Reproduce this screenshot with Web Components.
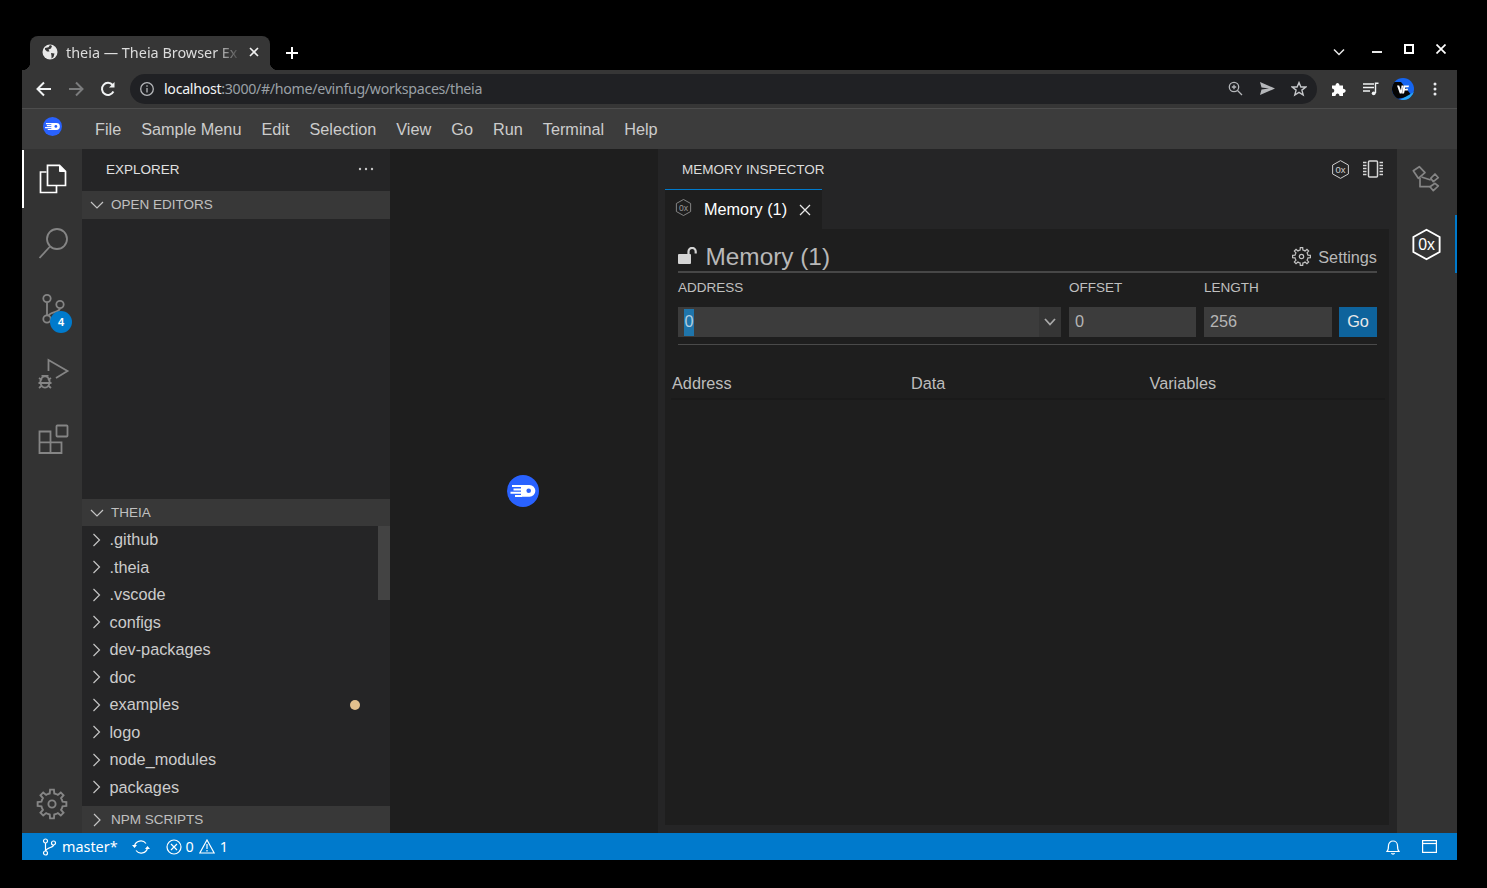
<!DOCTYPE html>
<html>
<head>
<meta charset="utf-8">
<title>theia</title>
<style>
  html, body { margin: 0; height: 100%; background: #000; overflow: hidden; }
</style>
</head>
<body>
<browser-window>
  <menu-bar></menu-bar>
  <ide-main></ide-main>
  <status-bar></status-bar>
</browser-window>

<script>
// builds a gear outline, used by both settings icons
function gearPath(cx, cy, outer, inner, teeth){
    let d = '';
    const step = Math.PI * 2 / teeth;
    for(let i = 0; i < teeth; i++){
        const a = i * step - Math.PI / 2;
        const pts = [
            [inner, a - step * .5], [inner, a - step * .27],
            [outer, a - step * .17], [outer, a + step * .17],
            [inner, a + step * .27]
        ];
        pts.forEach(([r, t], n) => {
            const cmd = (i === 0 && n === 0) ? 'M' : 'L';
            d += `${cmd}${(cx + r * Math.cos(t)).toFixed(2)} ${(cy + r * Math.sin(t)).toFixed(2)}`;
        });
    }
    return d + 'Z';
}

function hexIcon(size, stroke, color){
    return `<svg width="${size}" height="${size}" viewBox="0 0 32 32" fill="none">
      <path d="M16 2.5 28 9.2V22.8L16 29.5 4 22.8V9.2Z" stroke="${color}" stroke-width="${stroke}"/>
      <text x="16" y="21.2" text-anchor="middle" font-family="Liberation Sans, sans-serif" font-size="14.5" fill="${color}">0x</text>
    </svg>`;
}

function logo(size){
    return `<svg width="${size}" height="${size}" viewBox="0 0 32 32">
      <circle cx="16" cy="16" r="16" fill="#2962ff"/>
      <path d="M14 10H22.5A5.85 5.85 0 0 1 22.5 21.7H14Z" fill="#fff"/>
      <path d="M5 10H15V12H5ZM6.5 13.4H15V15.4H6.5ZM3.5 16.8H15V18.8H3.5ZM8 20H15V22H8Z" fill="#fff"/>
      <circle cx="21.7" cy="15.8" r="2.3" fill="#2962ff"/>
    </svg>`;
}

class BrowserWindow extends HTMLElement{
    constructor(){
        super();
        this.attachShadow({mode: 'open'});
    }

    connectedCallback(){
        this.shadowRoot.innerHTML = `
        <style>
            :host{
                display: flex;
                flex-direction: column;
                box-sizing: border-box;
                height: 888px;
                padding: 36px 30px 28px 22px;
                background: #000;
            }
            .strip{
                display: flex;
                height: 34px;
                flex: none;
                color: #fff;
            }
            .tab{
                position: relative;
                box-sizing: border-box;
                width: 240px;
                margin-left: 8px;
                display: flex;
                align-items: center;
                padding: 0 11px 2px 12px;
                background: #363636;
                border-radius: 8px 8px 0 0;
                font: 14.4px "Noto Sans", sans-serif;
                color: #dcdcdc;
            }
            .tab::before, .tab::after{
                content: '';
                position: absolute;
                bottom: 0;
                width: 8px;
                height: 8px;
            }
            .tab::before{ left: -8px; background: radial-gradient(circle at 0 0, #000 8px, #363636 8.5px); }
            .tab::after{ right: -8px; background: radial-gradient(circle at 100% 0, #000 8px, #363636 8.5px); }
            .title{
                flex: 1;
                margin-left: 8px;
                white-space: nowrap;
                -webkit-mask-image: linear-gradient(90deg, #000 82%, transparent 96%);
                mask-image: linear-gradient(90deg, #000 82%, transparent 96%);
            }
            .new{ margin-left: 6px; width: 32px; display: flex; align-items: center; justify-content: center; }
            .ctl{ width: 32px; height: 26px; display: flex; align-items: center; justify-content: center; }
            .first{ margin-left: auto; margin-right: 6px; margin-top: 3px; }
            .toolbar{
                flex: none;
                box-sizing: border-box;
                height: 39px;
                display: flex;
                align-items: center;
                padding: 0 6px 1px;
                background: #363636;
                border-bottom: 1px solid #4d4d4d;
            }
            .btn{
                flex: none;
                width: 32px;
                height: 30px;
                display: flex;
                align-items: center;
                justify-content: center;
            }
            .omni{
                flex: 1;
                margin: 0 6px;
                height: 30px;
                display: flex;
                align-items: center;
                padding: 0 2px 0 9px;
                border-radius: 15px;
                background: #202124;
                font: 14.2px "Noto Sans", sans-serif;
                color: #9aa0a6;
            }
            .url{ flex: 1; margin-left: 9px; letter-spacing: -.3px; white-space: nowrap; }
            .url b{ font-weight: 400; color: #f1f3f4; }
            .avatar{ width: 22px; height: 22px; }
        </style>
        <div class="strip">
          <div class="tab">
            <svg width="16" height="16" viewBox="0 0 16 16"><circle cx="8" cy="8" r="7.5" fill="#e8e8e8"/><path d="M3 4 6.5 3.2 8 1 10 2 9 4.5 6.5 5.5 7.5 7.5 5 7.5 3 5.5ZM9 9 12.5 9.5 11.5 13 9.5 14.5 9.5 12Z" fill="#363636"/></svg>
            <span class="title">theia — Theia Browser Ex</span>
            <svg width="10" height="10" viewBox="0 0 10 10" stroke="#f0f0f0" stroke-width="1.6"><path d="M1 1 9 9M9 1 1 9"/></svg>
          </div>
          <div class="new"><svg width="14" height="14" viewBox="0 0 14 14" stroke="#fff" stroke-width="2"><path d="M7 1V13M1 7H13"/></svg></div>
          <div class="ctl first"><svg width="12" height="8" viewBox="0 0 12 8" fill="none" stroke="#e8e8e8" stroke-width="1.5"><path d="M1 1.5 6 6.5 11 1.5"/></svg></div>
          <div class="ctl" style="align-items:flex-start;padding-top:15px;height:11px"><svg width="10" height="2"><rect width="10" height="2" fill="#e8e8e8"/></svg></div>
          <div class="ctl"><svg width="10" height="10" viewBox="0 0 10 10" fill="none" stroke="#fff" stroke-width="2"><rect x="1" y="1" width="8" height="8"/></svg></div>
          <div class="ctl"><svg width="10" height="10" viewBox="0 0 10 10" stroke="#fff" stroke-width="1.7"><path d="M.5.5 9.5 9.5M9.5.5.5 9.5"/></svg></div>
        </div>
        <div class="toolbar">
          <div class="btn"><svg width="16" height="16" viewBox="0 0 16 16" fill="none" stroke="#f1f3f4" stroke-width="2"><path d="M15 8H2M8 1.5 1.5 8 8 14.5"/></svg></div>
          <div class="btn"><svg width="16" height="16" viewBox="0 0 16 16" fill="none" stroke="#7b7c7d" stroke-width="2"><path d="M1 8H14M8 1.5 14.5 8 8 14.5"/></svg></div>
          <div class="btn"><svg width="16" height="16" viewBox="0 0 16 16" fill="none" stroke="#f1f3f4" stroke-width="2"><path d="M13.4 10.5A6 6 0 1 1 12.6 4"/><path d="M14.5 1V6.5H9Z" fill="#f1f3f4" stroke="none"/></svg></div>
          <div class="omni">
            <svg width="16" height="16" viewBox="0 0 16 16" fill="none" stroke="#b5b7ba" stroke-width="1.3"><circle cx="8" cy="8" r="6.3"/><path d="M8 7V11.5M8 4.3V5.8"/></svg>
            <span class="url"><b>localhost</b>:3000/#/home/evinfug/workspaces/theia</span>
            <div class="btn"><svg width="15" height="15" viewBox="0 0 15 15" fill="none" stroke="#b5b7ba" stroke-width="1.3"><circle cx="6" cy="6" r="4.7"/><path d="M9.5 9.5 14 14M3.8 6H8.2M6 3.8V8.2"/></svg></div>
            <div class="btn"><svg width="15" height="13" viewBox="0 0 15 13"><path d="M0 0 15 6.5 0 13 1.5 7.5 9 6.5 1.5 5.5Z" fill="#b5b7ba"/></svg></div>
            <div class="btn"><svg width="16" height="16" viewBox="0 0 16 16" fill="none" stroke="#c4c6c9" stroke-width="1.4"><path d="M8 1.6 9.9 6H14.8L10.9 9.1 12.2 14 8 11.3 3.8 14 5.1 9.1 1.2 6H6.1Z"/></svg></div>
          </div>
          <div class="btn"><svg width="16" height="16" viewBox="0 0 16 16"><path d="M1 4.5H4.5C4.5 1 8.5 1 8.5 4.5H12V7.8C15.6 7.8 15.6 12 12 12V15H8.5C8.5 11.5 4.5 11.5 4.5 15H1V11.8C4 11.8 4 7.5 1 7.5Z" fill="#fff"/></svg></div>
          <div class="btn"><svg width="16" height="14" viewBox="0 0 16 14" fill="none" stroke="#f1f3f4" stroke-width="1.4"><path d="M0 2H11M0 5.5H11M0 9H7"/><path d="M12.5 11V1.2H15.5"/><circle cx="10.7" cy="11.3" r="1.9" fill="#f1f3f4" stroke="none"/></svg></div>
          <div class="btn"><svg class="avatar" viewBox="0 0 22 22"><defs><clipPath id="av"><circle cx="11" cy="11" r="11"/></clipPath></defs><g clip-path="url(#av)"><rect width="22" height="22" fill="#1565f0"/><path d="M0 4 9 4 20 18 0 22Z" fill="#050505"/><path d="M8 22 22 14 22 22Z" fill="#29a9f5"/><path d="M5 7.5H7.2L9 12.5 9.5 7.5H11.3L9.7 15.5H7.8ZM11.5 7.5H17L16.6 9.3H13.3L13 10.8H16L15.7 12.5H12.7L12 15.5H10Z" fill="#fff"/></g></svg></div>
          <div class="btn"><svg width="4" height="14" viewBox="0 0 4 14" fill="#e8eaed"><circle cx="2" cy="2" r="1.5"/><circle cx="2" cy="7" r="1.5"/><circle cx="2" cy="12" r="1.5"/></svg></div>
        </div>
        <slot></slot>`;
    }
}

class MenuBar extends HTMLElement{
    constructor(){
        super();
        this.attachShadow({mode: 'open'});
    }

    connectedCallback(){
        const items = ['File','Sample Menu','Edit','Selection','View','Go','Run','Terminal','Help'];
        this.shadowRoot.innerHTML = `
        <style>
            :host{
                display: flex;
                box-sizing: border-box;
                height: 40px;
                align-items: center;
                background: #3c3c3c;
                color: #cccccc;
                font: 16.25px "Liberation Sans", sans-serif;
            }
            .logo{ width: 60px; display: flex; justify-content: center; margin-top: -6px; }
            nav{ display: flex; gap: 20px; margin-left: 13px; }
        </style>
        <div class="logo">${logo(19)}</div>
        <nav>${items.map(i => `<span>${i}</span>`).join('')}</nav>`;
    }
}

class IdeMain extends HTMLElement{
    constructor(){
        super();
        this.attachShadow({mode: 'open'});
    }

    connectedCallback(){
        this.shadowRoot.innerHTML = `
        <style>
            :host{
                display: grid;
                grid-template-columns: 60px 308px 268px 739px 60px;
                height: 684px;
                flex: none;
                background: #1e1e1e;
            }
            .editor{ display: flex; align-items: center; justify-content: center; padding: 0 2px 1px 0; }
        </style>
        <activity-bar></activity-bar>
        <side-explorer></side-explorer>
        <div class="editor">${logo(32)}</div>
        <memory-panel></memory-panel>
        <right-bar></right-bar>`;
    }
}

class ActivityBar extends HTMLElement{
    constructor(){
        super();
        this.attachShadow({mode: 'open'});
    }

    connectedCallback(){
        const c = '#858585';
        this.shadowRoot.innerHTML = `
        <style>
            :host{
                display: flex;
                flex-direction: column;
                gap: 7px;
                padding-top: 1px;
                background: #333333;
            }
            .item{ position: relative; height: 58px; flex: none; }
            .item svg{ display: block; }
            .active{ box-shadow: inset 2px 0 0 #fff; }
            .badge{
                position: absolute;
                left: 28px;
                top: 31px;
                width: 22px;
                height: 22px;
                border-radius: 50%;
                background: #007acc;
                color: #fff;
                font: 700 11px/22px "Liberation Sans", sans-serif;
                text-align: center;
            }
            .gear{ margin-top: auto; }
        </style>
        <div class="item active"><svg width="60" height="58" fill="none" stroke="#fff" stroke-width="1.7">
          <path d="M25.5 15.3H37.5L43.5 21.3V35.5H25.5Z"/><path d="M37.5 15.5V21.5H43.5" fill="#fff" stroke-width="1"/>
          <path d="M24.5 22H18.5V42.5H34.5V36"/></svg></div>
        <div class="item"><svg width="60" height="58" fill="none" stroke="${c}" stroke-width="1.8">
          <circle cx="35" cy="24" r="10"/><path d="M28 31.5 17.5 43"/></svg></div>
        <div class="item"><svg width="60" height="58" fill="none" stroke="${c}" stroke-width="1.8">
          <circle cx="25" cy="18.5" r="3.7"/><circle cx="38" cy="24.5" r="3.7"/><circle cx="25" cy="39" r="3.7"/>
          <path d="M25 22.5V35M38 28.5C37 33 29 31 26.5 35.5"/></svg><span class="badge">4</span></div>
        <div class="item"><svg width="60" height="58" fill="none" stroke="${c}" stroke-width="1.8">
          <path d="M26.5 26V15L45.5 26 34 33"/><ellipse cx="23" cy="37" rx="4.6" ry="5.6"/>
          <path d="M17 33 20 35M29 33 26 35M16.5 38H29.5M17 43 20 40.5M29 43 26 40.5M19.5 30.8H26.5"/></svg></div>
        <div class="item"><svg width="60" height="58" fill="none" stroke="${c}" stroke-width="1.8">
          <rect x="34.5" y="15.5" width="11" height="11" rx=".8"/>
          <path d="M17.5 21.5H28.5V43H17.5ZM17.5 32.3H39.5V43H28.5"/></svg></div>
        <div class="item gear"><svg width="60" height="58" fill="none" stroke="${c}" stroke-width="1.9" style="margin-top:-3px">
          <path d="${gearPath(30, 32, 14.5, 10.8, 8)}"/><circle cx="30" cy="32" r="3.6"/></svg></div>`;
    }
}

class SectionHead extends HTMLElement{
    constructor(){
        super();
        this.attachShadow({mode: 'open'});
    }

    connectedCallback(){
        const open = this.hasAttribute('open');
        this.shadowRoot.innerHTML = `
        <style>
            :host{
                display: flex;
                align-items: center;
                flex: none;
                box-sizing: border-box;
                height: var(--h, 27px);
                background: #383838;
                color: #c0c0c0;
                font: 13.5px "Liberation Sans", sans-serif;
            }
            .ic{ width: 29px; display: flex; justify-content: center; padding-left: 1px; box-sizing: border-box; }
            .t{ margin-top: var(--shift, 0); }
        </style>
        <span class="ic">${open
            ? '<svg width="14" height="8" viewBox="0 0 14 8" fill="none" stroke="#c5c5c5" stroke-width="1.2"><path d="M1 1 7 7 13 1"/></svg>'
            : '<svg width="8" height="14" viewBox="0 0 8 14" fill="none" stroke="#c5c5c5" stroke-width="1.2"><path d="M1 1 7 7 1 13"/></svg>'}</span>
        <span class="t"><slot></slot></span>`;
    }
}

class TreeRow extends HTMLElement{
    constructor(){
        super();
        this.attachShadow({mode: 'open'});
    }

    connectedCallback(){
        const dirty = this.hasAttribute('dirty');
        this.shadowRoot.innerHTML = `
        <style>
            :host{
                display: flex;
                align-items: center;
                box-sizing: border-box;
                height: 27.5px;
                padding-left: 10px;
                color: #cccccc;
                font: 16.25px "Liberation Sans", sans-serif;
            }
            svg{ margin-right: 8.5px; }
            .dot{
                width: 10px;
                height: 10px;
                margin-left: auto;
                margin-right: 30px;
                border-radius: 50%;
                background: #e2c08d;
            }
        </style>
        <svg width="9" height="14" viewBox="0 0 9 14" fill="none" stroke="#c5c5c5" stroke-width="1.2"><path d="M1.5 1 7.5 7 1.5 13"/></svg>
        <slot></slot>
        ${dirty ? '<span class="dot"></span>' : ''}`;
    }
}

class SideExplorer extends HTMLElement{
    constructor(){
        super();
        this.attachShadow({mode: 'open'});
    }

    connectedCallback(){
        const rows = ['.github','.theia','.vscode','configs','dev-packages','doc','examples','logo','node_modules','packages'];
        this.shadowRoot.innerHTML = `
        <style>
            :host{
                display: flex;
                flex-direction: column;
                background: #252526;
                min-width: 0;
            }
            .title{
                flex: none;
                height: 42px;
                display: flex;
                align-items: center;
                justify-content: space-between;
                box-sizing: border-box;
                padding: 0 16px 2px 24px;
                color: #e0e0e0;
                font: 13.5px "Liberation Sans", sans-serif;
            }
            .open{ --h: 28px; --shift: -2px; }
            .empty{ height: 280px; flex: none; }
            .list{
                position: relative;
                flex: none;
                height: 280px;
                overflow: hidden;
            }
            .thumb{
                position: absolute;
                right: 0;
                top: 0;
                width: 12px;
                height: 74px;
                background: #434343;
            }
        </style>
        <div class="title"><span>EXPLORER</span>
          <svg width="16" height="4" viewBox="0 0 16 4" fill="#c5c5c5"><circle cx="2" cy="2" r="1.2"/><circle cx="8" cy="2" r="1.2"/><circle cx="14" cy="2" r="1.2"/></svg></div>
        <section-head class="open" open>OPEN EDITORS</section-head>
        <div class="empty"></div>
        <section-head open>THEIA</section-head>
        <div class="list">
          ${rows.map(r => `<tree-row ${r === 'examples' ? 'dirty' : ''}>${r}</tree-row>`).join('')}
          <div class="thumb"></div>
        </div>
        <section-head>NPM SCRIPTS</section-head>`;
    }
}

class MemoryField extends HTMLElement{
    constructor(){
        super();
        this.attachShadow({mode: 'open'});
    }

    connectedCallback(){
        const select = this.hasAttribute('select');
        this.shadowRoot.innerHTML = `
        <style>
            :host{ display: flex; flex-direction: column; min-width: 0; }
            label{
                height: 34px;
                padding-top: 7px;
                box-sizing: border-box;
                color: #c0c0c0;
                font: 13.5px "Liberation Sans", sans-serif;
            }
            .box{
                display: flex;
                align-items: center;
                height: 30px;
                box-sizing: border-box;
                padding: 0 6px 2px;
                background: #3c3c3c;
                color: #b5b5b5;
                font: 16.25px "Liberation Sans", sans-serif;
            }
            .box.select{ padding: 0 0 0 6px; }
            .sel{ background: #1f75ab; height: 27px; line-height: 25px; padding: 0 .5px; color: #b4cfe0; }
            .chev{
                margin-left: auto;
                align-self: stretch;
                width: 22px;
                display: flex;
                align-items: center;
                justify-content: center;
                background: #353535;
            }
        </style>
        <label>${this.getAttribute('label')}</label>
        <div class="box ${select ? 'select' : ''}">
          ${select
            ? `<span class="sel">${this.getAttribute('value')}</span><span class="chev"><svg width="12" height="8" viewBox="0 0 12 8" fill="none" stroke="#a8a8a8" stroke-width="1.8"><path d="M1 1 6 6.5 11 1"/></svg></span>`
            : this.getAttribute('value')}
        </div>`;
    }
}

class MemoryPanel extends HTMLElement{
    constructor(){
        super();
        this.attachShadow({mode: 'open'});
    }

    connectedCallback(){
        this.shadowRoot.innerHTML = `
        <style>
            :host{
                display: flex;
                flex-direction: column;
                box-sizing: border-box;
                padding: 0 8px 8px 7px;
                background: #252526;
                color: #cccccc;
                font: 16.25px "Liberation Sans", sans-serif;
                min-width: 0;
            }
            .head{
                flex: none;
                height: 40px;
                display: flex;
                align-items: center;
                padding: 0 6px 0 17px;
                color: #dcdcdc;
                font-size: 13.5px;
            }
            .tools{ margin-left: auto; display: flex; gap: 12.5px; align-items: center; }
            .tabs{ flex: none; height: 40px; display: flex; }
            .tab{
                box-sizing: border-box;
                width: 157px;
                display: flex;
                align-items: center;
                padding-left: 9px;
                border-top: 1px solid #007acc;
                background: #1e1e1e;
                color: #fff;
            }
            .tab .name{ margin-left: 11px; margin-right: 12px; }
            .tab svg:first-child{ margin-top: -4px; }
            .body{
                flex: 1;
                display: flex;
                flex-direction: column;
                background: #1e1e1e;
                min-height: 0;
            }
            .options{ margin: 0 12px 0 13px; padding-bottom: 7px; border-bottom: 1px solid #4a4a4a; }
            .top{
                height: 44px;
                box-sizing: border-box;
                display: flex;
                align-items: center;
                padding-top: 13px;
                border-bottom: 2px solid #474747;
                color: #b8b8b8;
            }
            .top .h{ font-size: 24.375px; margin-left: 8.5px; }
            .settings{ margin-left: auto; padding-top: 2px; display: flex; align-items: center; gap: 7px; }
            .lock{ margin-top: -2px; }
            .row{
                display: grid;
                grid-template-columns: 383px 127px 128px 38px;
                column-gap: 8px;
            }
            .go{
                align-self: end;
                height: 30px;
                background: #0e639c;
                color: #e8e8e8;
                text-align: center;
                line-height: 28px;
                margin-left: -1px;
                width: 38px;
            }
            .cols{
                position: relative;
                display: grid;
                grid-template-columns: 239px 238.5px 1fr;
                height: 55px;
                align-items: center;
                padding: 22px 0 0 7px;
                box-sizing: border-box;
                color: #bdbdbd;
            }
            .cols::after{
                content: '';
                position: absolute;
                left: 6px;
                right: 4px;
                bottom: 0;
                height: 2px;
                background: #1a1a1a;
            }
        </style>
        <div class="head"><span>MEMORY INSPECTOR</span>
          <div class="tools">
            ${hexIcon(21, 1.5, '#d0d0d0')}
            <svg width="20" height="18" viewBox="0 0 20 18" fill="none"><rect x="5.5" y="1" width="9" height="16" rx="1" stroke="#d8d8d8" stroke-width="1.5"/><path d="M0 2.5H3.5M0 5.5H3.5M0 8.5H3.5M0 11.5H3.5M0 14.5H3.5M16.5 2.5H20M16.5 5.5H20M16.5 8.5H20M16.5 11.5H20M16.5 14.5H20" stroke="#d8d8d8" stroke-width="1.7"/></svg>
          </div>
        </div>
        <div class="tabs"><div class="tab">
          ${hexIcon(19, 1.4, '#9a9a9a')}
          <span class="name">Memory (1)</span>
          <svg width="12" height="12" viewBox="0 0 12 12" stroke="#e8e8e8" stroke-width="1.3"><path d="M1 1 11 11M11 1 1 11"/></svg>
        </div></div>
        <div class="body">
          <div class="options">
            <div class="top">
              <svg class="lock" width="19" height="17" viewBox="0 0 19 17"><rect y="7" width="13" height="10" rx="1" fill="#d4d4d4"/><path d="M10.5 7V4.5A3.6 3.6 0 0 1 17.7 4.5V6.5" fill="none" stroke="#d4d4d4" stroke-width="2.2"/></svg>
              <span class="h">Memory (1)</span>
              <span class="settings">
                <svg width="19" height="19" viewBox="0 0 19 19" fill="none" stroke="#c4c4c4" stroke-width="1.2" style="margin-top:-2px"><path d="${gearPath(9.5, 9.5, 9, 6.6, 8)}"/><circle cx="9.5" cy="9.5" r="2.2"/></svg>
                <span>Settings</span>
              </span>
            </div>
            <div class="row">
              <memory-field label="ADDRESS" value="0" select></memory-field>
              <memory-field label="OFFSET" value="0"></memory-field>
              <memory-field label="LENGTH" value="256"></memory-field>
              <div class="go">Go</div>
            </div>
          </div>
          <div class="cols"><span>Address</span><span>Data</span><span>Variables</span></div>
        </div>`;
    }
}

class RightBar extends HTMLElement{
    constructor(){
        super();
        this.attachShadow({mode: 'open'});
    }

    connectedCallback(){
        this.shadowRoot.innerHTML = `
        <style>
            :host{
                display: flex;
                flex-direction: column;
                gap: 7px;
                padding-top: 1px;
                background: #333333;
            }
            .item{ height: 58px; flex: none; display: flex; align-items: center; justify-content: center; padding-right: 2px; box-sizing: border-box; }
            .active{ box-shadow: inset -2px 0 0 #007acc; }
        </style>
        <div class="item"><svg width="28" height="28" viewBox="0 0 28 28" fill="none" stroke="#858585" stroke-width="1.7" stroke-linejoin="round">
          <path d="M1.3 5.7 7.3 1.7 13 7.7 6.3 13.3Z"/>
          <path d="M18.7 13.3 23 9 26.3 12.7 21.3 16.7Z"/>
          <path d="M18 21.7 23 18.3 26.3 21 21.3 25.7Z"/>
          <path d="M8 13V21.7H18M9.5 12 18.7 15"/></svg></div>
        <div class="item active">${hexIcon(35, 1.7, '#fff')}</div>`;
    }
}

class StatusBar extends HTMLElement{
    constructor(){
        super();
        this.attachShadow({mode: 'open'});
    }

    connectedCallback(){
        const s = 'fill="none" stroke="#fff" stroke-width="1.2"';
        this.shadowRoot.innerHTML = `
        <style>
            :host{
                display: flex;
                align-items: center;
                flex: none;
                box-sizing: border-box;
                height: 27px;
                padding: 0 20px 0 19px;
                background: #007acc;
                color: #fff;
                font: 14.4px "Noto Sans", sans-serif;
            }
            .m{ margin-left: 5px; }
            .sync{ margin-left: 14px; }
            .err{ margin-left: 16px; }
            .n{ margin-left: 4px; }
            .warn{ margin-left: 5px; }
            .right{ margin-left: auto; display: flex; align-items: center; gap: 22px; }
        </style>
        <svg width="16" height="18" viewBox="0 0 16 18" ${s}><circle cx="4.5" cy="3" r="2"/><circle cx="4.5" cy="15" r="2"/><circle cx="12.5" cy="5" r="2"/><path d="M4.5 5V13M12.5 7C12.5 10 6 9 4.5 13"/></svg>
        <span class="m">master*</span>
        <svg class="sync" width="18" height="16" viewBox="0 0 18 16" ${s}><path d="M2.5 7A6.5 6.5 0 0 1 14 4.5M15.5 9A6.5 6.5 0 0 1 4 11.5"/><path d="M0 6H5L2.5 9ZM13 10H18L15.5 7Z" fill="#fff" stroke="none"/></svg>
        <svg class="err" width="16" height="16" viewBox="0 0 16 16" ${s}><circle cx="8" cy="8" r="7"/><path d="M5 5 11 11M11 5 5 11"/></svg>
        <span class="n">0</span>
        <svg class="warn" width="16" height="15" viewBox="0 0 16 15" ${s}><path d="M8 1 15.2 14H.8Z"/><path d="M8 5V10M8 11V12.5"/></svg>
        <span class="n" style="margin-left:5px">1</span>
        <div class="right">
          <svg width="14" height="16" viewBox="0 0 14 16" ${s}><path d="M1 12.5C2.5 11 2.5 9 2.5 6.5A4.5 4.5 0 0 1 11.5 6.5C11.5 9 11.5 11 13 12.5Z"/><path d="M5.5 14A1.6 1.6 0 0 0 8.5 14"/></svg>
          <svg width="15" height="13" viewBox="0 0 15 13" ${s}><rect x=".6" y=".6" width="13.8" height="11.8"/><path d="M.6 3.5H14.4"/></svg>
        </div>`;
    }
}

customElements.define('browser-window', BrowserWindow);
customElements.define('menu-bar', MenuBar);
customElements.define('ide-main', IdeMain);
customElements.define('activity-bar', ActivityBar);
customElements.define('section-head', SectionHead);
customElements.define('tree-row', TreeRow);
customElements.define('side-explorer', SideExplorer);
customElements.define('memory-field', MemoryField);
customElements.define('memory-panel', MemoryPanel);
customElements.define('right-bar', RightBar);
customElements.define('status-bar', StatusBar);
</script>
</body>
</html>
